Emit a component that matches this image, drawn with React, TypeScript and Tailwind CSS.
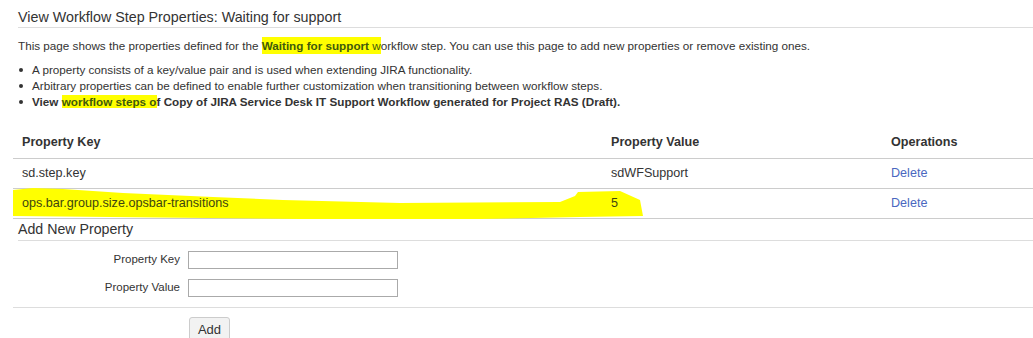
const rows = [
  { key: "sd.step.key", value: "sdWFSupport", marked: false },
  { key: "ops.bar.group.size.opsbar-transitions", value: "5", marked: true },
];

const Bullet = ({ children, bold }: { children: React.ReactNode; bold?: boolean }) => (
  <li className={`flex items-center h-[16px] ${bold ? "font-bold" : ""}`}>
    <span className="w-[4px] h-[4px] rounded-full bg-[#333] ml-[1px] mr-[9px]" />
    <span>{children}</span>
  </li>
);

const Marker = () => (
  <svg className="absolute left-0 top-0 overflow-visible pointer-events-none" width="640" height="30">
    <polygon
      fill="#ffff00"
      points="0,1 20,-1 50,0 110,4 200,8 270,11 387,14 547,13 562,7 565,3 607,2 627,11 630,27 567,28 467,30 287,30 0,27"
    />
  </svg>
);

export default function App() {
  return (
    <div className="w-[1033px] h-[338px] overflow-hidden bg-white text-[#333] font-['Liberation_Sans',Arial,sans-serif]">
      <div className="pl-[18px]">
        <h2 className="pt-[8px] leading-[19px] text-[14.3px] border-b border-[#ddd]">
          View Workflow Step Properties: Waiting for support
        </h2>
        <p className="mt-[10px] leading-[16px] text-[11.7px]">
          This page shows the properties defined for the{" "}
          <span className="bg-[#ffff00] py-[2px] text-[#3f5a0c]">
            <b>Waiting for support</b> w
          </span>
          orkflow step. You can use this page to add new properties or remove existing ones.
        </p>
        <ul className="mt-[8px] text-[11.7px]">
          <Bullet>A property consists of a key/value pair and is used when extending JIRA functionality.</Bullet>
          <Bullet>Arbitrary properties can be defined to enable further customization when transitioning between workflow steps.</Bullet>
          <Bullet bold>
            View <span className="bg-[#ffff00] text-[#3f5a0c]">workflow steps o</span>f Copy of JIRA Service Desk IT
            Support Workflow generated for Project RAS (Draft).
          </Bullet>
        </ul>
      </div>

      <div className="ml-[13px] mt-[17px] text-[12.6px]">
        <div className="grid grid-cols-[589px_280px_1fr] h-[32px] items-center border-b border-[#ccc] font-bold">
          <div className="pl-[9px]">Property Key</div>
          <div className="pl-[9px]">Property Value</div>
          <div className="pl-[9px]">Operations</div>
        </div>
        {rows.map((r) => (
          <div key={r.key} className="relative grid grid-cols-[589px_280px_1fr] h-[30px] pb-[1px] items-center border-b border-[#ccc]">
            {r.marked && <Marker />}
            <div className={`relative pl-[9px] ${r.marked ? "text-[#3d4510]" : ""}`}>{r.key}</div>
            <div className={`relative pl-[9px] ${r.marked ? "text-[#3d4510]" : ""}`}>{r.value}</div>
            <div className="relative pl-[9px] text-[#4a67c0]">Delete</div>
          </div>
        ))}
      </div>

      <div className="ml-[18px] pt-[2px] pb-[3px] leading-[16px] text-[14.2px] border-b border-[#ddd]">Add New Property</div>

      <div className="ml-[13px] mt-[10px] flex flex-col gap-[10px] text-[11.5px]">
        <div className="flex items-center h-[18px]">
          <label className="w-[167px] text-right">Property Key</label>
          <input className="ml-[8px] w-[210px] h-[18px] border border-[#aaa] bg-white" />
        </div>
        <div className="flex items-center h-[18px]">
          <label className="w-[167px] text-right">Property Value</label>
          <input className="ml-[8px] w-[210px] h-[18px] border border-[#aaa] bg-white" />
        </div>
      </div>

      <div className="ml-[13px] mt-[10px] border-t border-[#ddd]">
        <button className="ml-[176px] mt-[9px] w-[41px] h-[26px] text-[13px] text-[#333] bg-[#f2f2f2] border border-[#ccc] rounded-[3px]">
          Add
        </button>
      </div>
    </div>
  );
}
